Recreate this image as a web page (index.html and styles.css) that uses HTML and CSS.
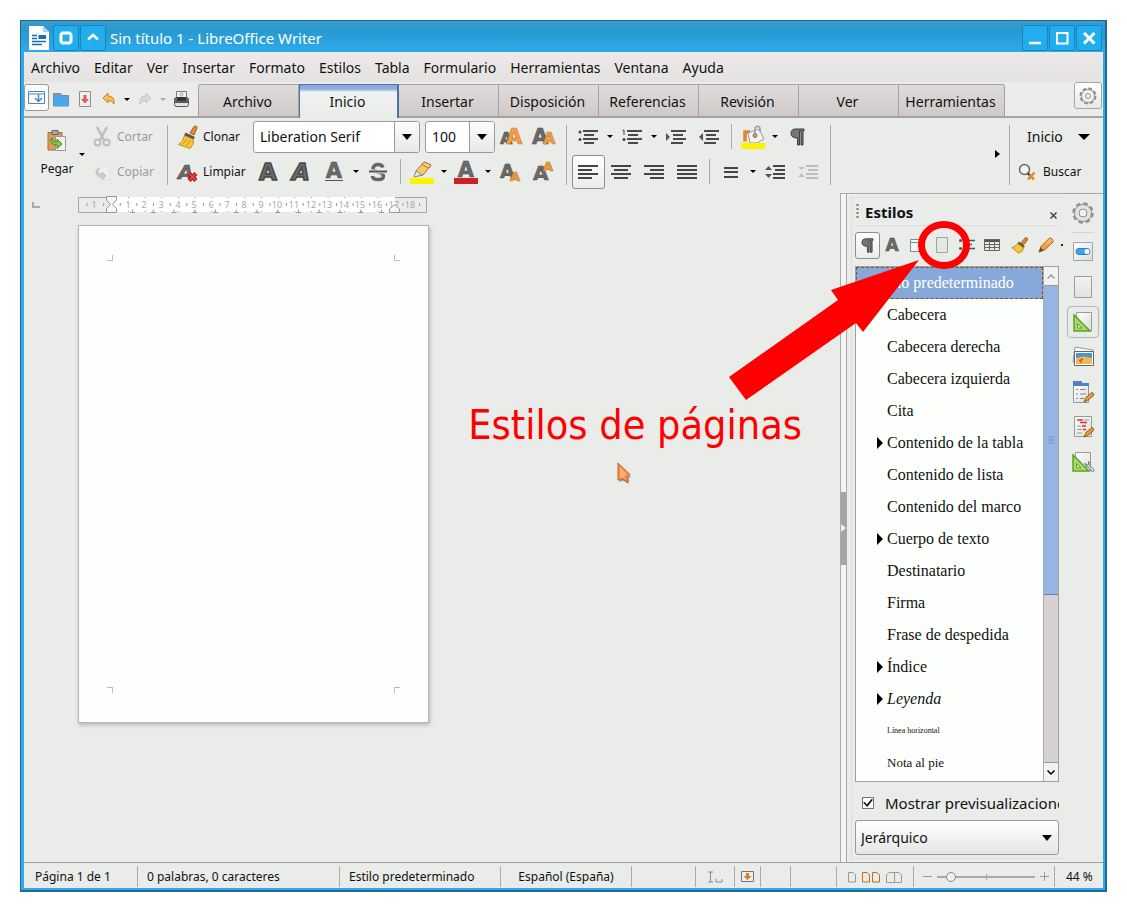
FILE: index.html
```html
<!DOCTYPE html>
<html lang="es">
<head>
<meta charset="utf-8">
<title>Sin título 1 - LibreOffice Writer</title>
<link rel="stylesheet" href="styles.css">
</head>
<body>
<svg class="defs" aria-hidden="true">
  <defs>
    <linearGradient id="g-orange" x1="0" y1="0" x2="0" y2="1"><stop offset="0" stop-color="#fbc36a"/><stop offset="1" stop-color="#ee8a24"/></linearGradient>
    <linearGradient id="g-paper" x1="0" y1="0" x2="1" y2="1"><stop offset="0" stop-color="#ffffff"/><stop offset="1" stop-color="#dcdcda"/></linearGradient>
    <linearGradient id="g-page" x1="0" y1="0" x2="0" y2="1"><stop offset="0" stop-color="#f4f4f3"/><stop offset="1" stop-color="#e0e1df"/></linearGradient>
  </defs>
  <symbol id="broom" viewBox="0 0 20 24"><path d="M12 8 16 1.500q3-1.500 3 1.500L16 10z" fill="#e08a2e" stroke="#a85d18"/><path d="M7.500 7.500 17 12 15 15 6 10.500z" fill="#555"/><path d="M6.500 10.500 15.500 14.500Q16 20 12 23.500L.5 19.500Q5.500 16.500 6.500 10.500z" fill="#f8c63a" stroke="#c58d14"/><path d="M4.500 19.500 9 14M8.500 21 12 15.500" stroke="#c58d14" fill="none"/></symbol>
  <symbol id="pencil" viewBox="0 0 16 16"><path d="M1 15 3 9.500 11.500 1q4 .5 3.500 4L6.500 13z" fill="url(#g-orange)" stroke="#a95f17"/><path d="M1 15 2.500 10.500 5.500 13.500z" fill="#5a4a3a"/></symbol>
  <symbol id="ruler3" viewBox="0 0 22 22"><path d="M4.500 1.500h15v18h-15z" fill="url(#g-paper)" stroke="#999"/><path d="M2 4v16h16z" fill="#a8d878" stroke="#5aa51c" stroke-width="1.500"/><path d="M5.500 12.500v4.500h4.500z" fill="#e5f3d8" stroke="#5aa51c"/></symbol>
  <symbol id="pilcrow" viewBox="0 0 16 20"><path d="M6.500 2H15v2h-1v14h-2V4h-1.500v14h-2v-7Q2 11 2 6.500T6.500 2z" fill="#757575" stroke="#3c3c3c"/></symbol>
</svg>

<div class="screen">
<div class="window">
  <header class="titlebar">
    <svg class="app-icon" width="20" height="24" viewBox="0 0 20 24"><path d="M0 0h14l6 6v18H0z" fill="#fff"/><path d="M14 0v6h6z" fill="#9fd4f2"/><path d="M3 9.500h5M3 12.500h5M3 15.500h14M3 18.500h10" stroke="#1a6fae" stroke-width="1.500"/><rect x="9.500" y="9" width="7.500" height="4" fill="#1a6fae"/></svg>
    <button class="wbtn" aria-label="Fijar"><svg width="16" height="16" viewBox="0 0 16 16"><path d="M4.500 3h7L13 4.500v7L11.500 13h-7L3 11.500v-7z" fill="none" stroke="#fff" stroke-width="3"/></svg></button>
    <button class="wbtn" aria-label="Enrollar"><svg width="16" height="16" viewBox="0 0 16 16"><path d="M3 9.500 8 5l5 4.500" fill="none" stroke="#fff" stroke-width="2.500"/></svg></button>
    <h1>Sin título 1 - LibreOffice Writer</h1>
    <button class="wbtn" aria-label="Minimizar"><svg width="16" height="16" viewBox="0 0 16 16"><path d="M2 13h12" stroke="#fff" stroke-width="2.500"/></svg></button>
    <button class="wbtn" aria-label="Maximizar"><svg width="16" height="16" viewBox="0 0 16 16"><path d="M3 3h10.500v10.500H3z" fill="none" stroke="#fff" stroke-width="2"/></svg></button>
    <button class="wbtn" aria-label="Cerrar"><svg width="16" height="16" viewBox="0 0 16 16"><path d="M3 3l10.500 10.500M13.500 3 3 13.500" stroke="#fff" stroke-width="3"/></svg></button>
  </header>

  <nav class="menubar">
    <button>Archivo</button><button>Editar</button><button>Ver</button><button>Insertar</button><button>Formato</button><button>Estilos</button><button>Tabla</button><button>Formulario</button><button>Herramientas</button><button>Ventana</button><button>Ayuda</button>
  </nav>

  <div class="tabrow">
    <div class="quick">
      <button class="framed" aria-label="Menú"><svg width="17" height="16" viewBox="0 0 17 16"><path d="M.5 1.500h16v12H.5zM.5 4h16" fill="none" stroke="#4d86bd"/><path d="M10.500 4v7M7 8l3.500 3.500L14 8" fill="none" stroke="#4d86bd" stroke-width="1.500"/></svg></button>
      <button aria-label="Abrir"><svg width="16" height="15" viewBox="0 0 16 15"><path d="M.5 14V1.500h7l1.500 2h6.500V14z" fill="#7d98ac" stroke="#718a9c"/><path d="M1 4.500h14V14H1z" fill="#43a9f2"/></svg></button>
      <button aria-label="Guardar"><svg width="12" height="16" viewBox="0 0 12 16"><path d="M.5.5h11v15H.5z" fill="#eee" stroke="#8e8e8e"/><path d="M4.500 4h3v4H10l-4 4.500L2 8h2.500z" fill="#e8584e"/></svg></button>
      <button aria-label="Deshacer"><svg width="14" height="14" viewBox="0 0 14 14"><path d="M6 1v3q7 0 6 8-2-3.500-6-3.500V11L1 6z" fill="#f9bd55" stroke="#d08422"/></svg></button>
      <button class="drop" aria-label="Más deshacer"><i></i></button>
      <button aria-label="Rehacer"><svg width="14" height="14" viewBox="0 0 14 14"><path d="M8 1v3Q1 4 2 12q2-3.500 6-3.500V11l5-5z" fill="#d8d9d8" stroke="#c4c5c4"/></svg></button>
      <button class="drop off" aria-label="Más rehacer"><i></i></button>
      <button aria-label="Imprimir"><svg width="17" height="16" viewBox="0 0 17 16"><path d="M3.500 7V.5h10V7" fill="#f4f4f4" stroke="#777"/><path d="M1 7.500 3 6h11l2 1.500V12H1z" fill="#666"/><path d="M4 6h9v4H4z" fill="#333"/><circle cx="8.500" cy="3.500" r="1.500" fill="none" stroke="#999"/><path d="M1.500 11.500h14v2q0 2-2 2h-10q-2 0-2-2z" fill="#e4e4e4" stroke="#555"/></svg></button>
    </div>
    <div class="tabs" role="tablist">
      <button role="tab">Archivo</button><button role="tab" class="active" aria-selected="true">Inicio</button><button role="tab">Insertar</button><button role="tab">Disposición</button><button role="tab">Referencias</button><button role="tab">Revisión</button><button role="tab">Ver</button><button role="tab">Herramientas</button>
    </div>
    <div class="tab-end">
      <button class="gear" aria-label="Configuración"><svg width="18" height="18" viewBox="0 0 18 18"><g fill="none" stroke="#8f8f8f"><circle cx="9" cy="9" r="7.500" stroke-dasharray="3.900 2" stroke-width="2"/><circle cx="9" cy="9" r="6.500" fill="#f2f2f2"/><circle cx="9" cy="9" r="2.500"/></g></svg></button>
    </div>
  </div>

  <div class="toolbar">
    <div class="paste">
      <button><svg width="20" height="24" viewBox="0 0 20 24"><path d="M1 3.500h14V21H1z" fill="#d99a5b" stroke="#a8713b"/><path d="M5 1.500h6v4H5z" fill="#aaa" stroke="#666"/><path d="M8.500 7.500h10v14h-10z" fill="#f3f3f3" stroke="#999"/><path d="M5 9q0 4 5 4v-3l5 5-5 4.500V16q-6 0-6.500-5z" fill="#86c940" stroke="#458c16"/></svg><span>Pegar</span></button>
      <button class="drop" aria-label="Pegado especial"><i></i></button>
    </div>
    <div class="rows cutcopy">
      <div class="row"><button class="labelled off"><svg width="18" height="20" viewBox="0 0 18 20"><g fill="none" stroke="#bdbebd"><path d="M4 0l7 13M14 0 7 13" stroke-width="2.500"/><ellipse cx="4.500" cy="15.500" rx="3" ry="3" stroke-width="2"/><ellipse cx="13.500" cy="15.500" rx="3" ry="3" stroke-width="2"/></g></svg><span>Cortar</span></button></div>
      <div class="row"><button class="labelled off"><svg width="18" height="18" viewBox="0 0 18 18"><path d="M5.500 3.500h11v13h-11z" fill="#efefee" stroke="#e2e3e2"/><path d="M7 5q-4 2-2 5 2 2 4 1.500V9l4 4-4 3.500V14q-6 0-6-5 0-3 4-4z" fill="#cfd0cf" stroke="#bdbebd"/></svg><span>Copiar</span></button></div>
    </div>
    <div class="vsep"></div>
    <div class="rows format">
      <div class="row"><button class="labelled"><svg width="20" height="24"><use href="#broom"/></svg><span>Clonar</span></button></div>
      <div class="row"><button class="labelled"><svg width="20" height="20" viewBox="0 0 20 20"><text x="0" y="17" class="ga gi" font-size="20">A</text><path d="M11 11.500l7 7M18 11.500l-7 7" stroke="#a31212" stroke-width="4"/><path d="M11 11.500l7 7M18 11.500l-7 7" stroke="#e8403a" stroke-width="2"/></svg><span>Limpiar</span></button></div>
    </div>
    <div class="rows">
      <div class="row">
        <div class="combo combo-font"><input type="text" value="Liberation Serif" aria-label="Nombre de letra"><button aria-label="Lista de letras"><i></i></button></div>
        <div class="combo combo-size"><input type="text" value="100" aria-label="Tamaño"><button aria-label="Lista de tamaños"><i></i></button></div>
        <button class="cell" aria-label="Aumentar tamaño"><svg width="24" height="22" viewBox="0 0 24 22"><text x="1" y="18" class="ga" font-size="16">A</text><text x="7" y="18" class="go" font-size="21">A</text></svg></button>
        <button class="cell" aria-label="Reducir tamaño"><svg width="24" height="22" viewBox="0 0 24 22"><text x="0" y="18" class="ga" font-size="21">A</text><text x="11" y="18" class="go" font-size="16">A</text></svg></button>
      </div>
      <div class="row">
        <button class="cell" aria-label="Negrita"><svg width="22" height="22" viewBox="0 0 22 22"><text x="11" y="19" class="ga gw" text-anchor="middle" font-size="23">A</text></svg></button>
        <button class="cell" aria-label="Cursiva"><svg width="22" height="22" viewBox="0 0 22 22"><text x="11" y="19" class="ga gw gi" text-anchor="middle" font-size="23">A</text></svg></button>
        <button class="cell" aria-label="Subrayado"><svg width="22" height="22" viewBox="0 0 22 22"><text x="11" y="17" class="ga" text-anchor="middle" font-size="21">A</text><path d="M2 19.500h18" stroke="#555"/></svg></button>
        <button class="drop" aria-label="Más subrayado"><i></i></button>
        <button class="cell" aria-label="Tachado"><svg width="22" height="22" viewBox="0 0 22 22"><path d="M16 6.500Q15 3.500 11 3.500T6 7q0 3 5 4t5.500 4q0 3.500-5.500 3.500T5.500 15" fill="none" stroke="#666" stroke-width="3.500"/><path d="M2 10.500h18" stroke="#eaecea" stroke-width="4"/><path d="M2 10.500h18" stroke="#555" stroke-width="2"/></svg></button>
        <div class="hsep"></div>
        <button class="cell" aria-label="Color de resaltado"><svg width="24" height="24" viewBox="0 0 24 24"><path d="M6 11 14 2l7 3-8 10-5 1z" fill="#fbc95c" stroke="#a8722a"/><path d="M14 2l7 3-2 3-7-3.500z" fill="#f3d9a0" stroke="#a8722a"/><path d="M6 11 4 17l4-1 4-1z" fill="#e9e9e9" stroke="#888"/><path d="M0 18h24v6H0z" fill="#fff200"/></svg></button>
        <button class="drop" aria-label="Más resaltado"><i></i></button>
        <button class="cell" aria-label="Color de letra"><svg width="24" height="24" viewBox="0 0 24 24"><text x="12" y="17" class="ga" text-anchor="middle" font-size="21">A</text><path d="M0 18h24v6H0z" fill="#cd1f24"/></svg></button>
        <button class="drop" aria-label="Más colores"><i></i></button>
        <button class="cell" aria-label="Subíndice"><svg width="24" height="24" viewBox="0 0 24 24"><text x="2" y="18" class="ga" font-size="19">A</text><text x="12" y="21" class="go" font-size="13">A</text></svg></button>
        <button class="cell" aria-label="Superíndice"><svg width="24" height="24" viewBox="0 0 24 24"><text x="2" y="20" class="ga" font-size="20">A</text><text x="12" y="11" class="go" font-size="13">A</text></svg></button>
      </div>
    </div>
    <div class="vsep"></div>
    <div class="rows">
      <div class="row">
        <button class="cell" aria-label="Viñetas"><svg width="20" height="16" viewBox="0 0 20 16"><path d="M5 2h15M6 6h10M5 10h15M6 14h10" stroke="#4a4a4a" stroke-width="2"/><circle cx="2" cy="3" r="1.500" fill="#444"/><circle cx="2" cy="10.500" r="1.500" fill="#444"/></svg></button>
        <button class="drop" aria-label="Más viñetas"><i></i></button>
        <button class="cell" aria-label="Numeración"><svg width="20" height="16" viewBox="0 0 20 16"><path d="M5 2h15M6 6h10M5 10h15M6 14h10" stroke="#4a4a4a" stroke-width="2"/><path d="M.5 2 2 .8V6" stroke="#444" fill="none"/><circle cx="2" cy="10.500" r="1.500" fill="#444"/></svg></button>
        <button class="drop" aria-label="Más numeración"><i></i></button>
        <button class="cell" aria-label="Aumentar sangría"><svg width="20" height="16" viewBox="0 0 20 16"><path d="M5 2h15M7 6h10M7 10h13M5 14h12" stroke="#4a4a4a" stroke-width="2"/><path d="M0 4v8l4-4z" fill="#555"/></svg></button>
        <button class="cell" aria-label="Reducir sangría"><svg width="20" height="16" viewBox="0 0 20 16"><path d="M5 2h15M7 6h10M7 10h13M5 14h12" stroke="#4a4a4a" stroke-width="2"/><path d="M4 4v8L0 8z" fill="#555"/></svg></button>
        <div class="hsep"></div>
        <button class="cell" aria-label="Color de fondo"><svg width="24" height="24" viewBox="0 0 24 24"><path d="M4 16.500V7h5" fill="none" stroke="#e0862d" stroke-width="3.500"/><path d="M7 8 18 4l5 10-7 4H9z" fill="#f3f3f3" stroke="#999"/><path d="M14 9V3q2.500-3.500 5 0v4" fill="none" stroke="#999" stroke-width="1.500"/><circle cx="14" cy="10.500" r="2" fill="#e8943c" stroke="#777"/><path d="M0 18h24v6H0z" fill="#fff200"/></svg></button>
        <button class="drop" aria-label="Más fondos"><i></i></button>
        <button class="cell" aria-label="Marcas de formato"><svg width="16" height="20"><use href="#pilcrow"/></svg></button>
      </div>
      <div class="row">
        <button class="cell pressed" aria-label="Izquierda"><svg width="20" height="16" viewBox="0 0 20 16"><path d="M0 2h20M0 6h14M0 10h20M0 14h14" stroke="#444" stroke-width="2"/></svg></button>
        <button class="cell" aria-label="Centro"><svg width="20" height="16" viewBox="0 0 20 16"><path d="M0 2h20M3 6h14M0 10h20M3 14h14" stroke="#444" stroke-width="2"/></svg></button>
        <button class="cell" aria-label="Derecha"><svg width="20" height="16" viewBox="0 0 20 16"><path d="M0 2h20M6 6h14M0 10h20M6 14h14" stroke="#444" stroke-width="2"/></svg></button>
        <button class="cell" aria-label="Justificado"><svg width="20" height="16" viewBox="0 0 20 16"><path d="M0 2h20M0 6h20M0 10h20M0 14h20" stroke="#444" stroke-width="2"/></svg></button>
        <div class="hsep"></div>
        <button class="cell" aria-label="Interlineado"><svg width="14" height="12" viewBox="0 0 14 12"><path d="M0 2h14M0 6h14M0 11h14" stroke="#444" stroke-width="2"/></svg></button>
        <button class="drop" aria-label="Más interlineado"><i></i></button>
        <button class="cell" aria-label="Aumentar espaciado"><svg width="20" height="16" viewBox="0 0 20 16"><path d="M8 2h12M10 6h10M8 10h12M8 14h12" stroke="#444" stroke-width="2"/><path d="M0 6h7L3.500 2zM0 10h7l-3.500 4z" fill="#555"/></svg></button>
        <button class="cell" aria-label="Reducir espaciado"><svg width="20" height="16" viewBox="0 0 20 16"><path d="M8 2h12M10 6h10M8 10h12M8 14h12" stroke="#bcbdbc" stroke-width="2"/><path d="M0 3h7L3.500 6zM0 13h7l-3.500-4z" fill="#c0c1c0"/></svg></button>
      </div>
    </div>
    <div class="vsep"></div>
    <button class="more" aria-label="Más herramientas"><i></i></button>
    <div class="vsep"></div>
    <div class="rows side-tools">
      <div class="row"><button class="home">Inicio<i></i></button></div>
      <div class="row"><button class="find"><svg width="18" height="18" viewBox="0 0 18 18"><circle cx="6.500" cy="6.500" r="5" fill="#f4f4f4" stroke="#666" stroke-width="1.500"/><path d="M9 9.500l7 7M16.500 9.500l-6.500 7" stroke="#e08a2e" stroke-width="2.500"/><path d="M9.500 10l2 2" stroke="#444" stroke-width="2"/></svg>Buscar</button></div>
    </div>
  </div>

  <div class="work">
    <main class="doc">
      <svg class="tabstop" width="8" height="6" viewBox="0 0 8 6"><path d="M1 0v5h7" fill="none" stroke="#aaa" stroke-width="2"/></svg>
      <div class="canvas">
        <svg class="ruler" width="350" height="18" viewBox="0 0 350 18">
          <path d="M33 1h284v15H33z" fill="#fdfffd"/>
          <path d="M33 1.500H.5v15H33M317 1.500h31.500v15H317" fill="none" stroke="#a5a5a5"/>
          <path d="M8.500 8.500H345" stroke="#999" stroke-width="3" stroke-dasharray="1 15.630"/>
          <path d="M50 1.500H316M50 15.500H316" stroke="#999" stroke-dasharray="1 15.630"/>
          <path d="M52 16.500H308" stroke="#999" stroke-dasharray="5 15.750"/><path d="M54 15H308" stroke="#999" stroke-width="3" stroke-dasharray="1 19.750"/>
          <path d="M28.500.5h10v3.500l-4 4.500 4 4v4h-10v-4l4-4-4-4.500z" fill="#f4f5f4" stroke="#999"/>
          <g class="nums">
            <text x="16" y="12">1</text><text x="50" y="12">1</text><text x="66" y="12">2</text><text x="83" y="12">3</text><text x="100" y="12">4</text><text x="116" y="12">5</text><text x="133" y="12">6</text><text x="149" y="12">7</text><text x="166" y="12">8</text><text x="183" y="12">9</text><text x="199" y="12">10</text><text x="216" y="12">11</text><text x="233" y="12">12</text><text x="249" y="12">13</text><text x="266" y="12">14</text><text x="282" y="12">15</text><text x="299" y="12">16</text><text x="316" y="12">17</text><text x="332" y="12">18</text>
          </g>
          <path d="M316.500 8.500l5 4.500v3.500h-10V13z" fill="#f4f5f4" stroke="#999"/>
        </svg>
        <div class="page"><b></b><b></b><b></b><b></b></div>
      </div>
    </main>
    <div class="splitter"><span></span></div>
    <aside class="panel">
      <div class="deck">
        <div class="deck-head"><svg width="3" height="15" viewBox="0 0 3 15"><path d="M1.500 0v15" stroke="#777" stroke-width="2" stroke-dasharray="2 2"/></svg><h2>Estilos</h2><button aria-label="Cerrar"><svg width="7" height="7" viewBox="0 0 7 7"><path d="M.5.5l6 6M6.500.5l-6 6" stroke="#444" stroke-width="1.500"/></svg></button></div>
        <div class="deck-tools">
          <button class="pressed" aria-label="Estilos de párrafo"><svg width="14" height="17"><use href="#pilcrow"/></svg></button>
          <button aria-label="Estilos de carácter"><svg width="16" height="16" viewBox="0 0 16 16"><text x="8" y="14" class="ga" text-anchor="middle" font-size="17">A</text></svg></button>
          <button aria-label="Estilos de marco"><svg width="16" height="16" viewBox="0 0 16 16"><path d="M1.500 2.500h13v12h-13zM1.500 5.500h13" fill="#f5f5f4" stroke="#888"/></svg></button>
          <button aria-label="Estilos de página"><svg width="14" height="18" viewBox="0 0 14 18"><path d="M1.500 1.500h11v15h-11z" fill="#e6e7e5" stroke="#a2a2a2"/></svg></button>
          <button aria-label="Estilos de lista"><svg width="16" height="16" viewBox="0 0 16 16"><path d="M4 3.500h12M4 7.500h9M4 11.500h12" stroke="#555" stroke-width="1.500"/><circle cx="1.500" cy="3.500" r="1.500" fill="#555"/><circle cx="1.500" cy="11.500" r="1.500" fill="#555"/></svg></button>
          <button aria-label="Estilos de tabla"><svg width="16" height="12" viewBox="0 0 16 12"><path d="M0 0h16v3H0z" fill="#555"/><path d="M.5.5h15v11H.5zM.5 5.500h15M.5 8.500h15M5.500 2v9.500M10.500 2v9.500" fill="none" stroke="#666"/></svg></button>
          <button class="wide" aria-label="Modo de relleno"><svg width="17" height="18" viewBox="0 0 17 18"><path d="M10 7 14.500 1.500q2.500 0 2 2.500L12.500 9z" fill="#e08a2e" stroke="#a85d18"/><path d="M8 5.500 14 10.500 12 12 6.500 7.500z" fill="#555"/><path d="M6.500 7.500 12.500 12Q11.500 16.500 7.500 17L.8 11.500Q4.500 11 6.500 7.500z" fill="#f8c63a" stroke="#c58d14"/></svg></button>
          <button aria-label="Nuevo estilo"><svg width="16" height="16"><use href="#pencil"/></svg></button>
          <button class="cut" aria-label="Más acciones"><i></i></button>
        </div>
        <div class="tree">
          <ul>
            <li class="sel">Estilo predeterminado</li>
            <li>Cabecera</li>
            <li>Cabecera derecha</li>
            <li>Cabecera izquierda</li>
            <li>Cita</li>
            <li class="parent">Contenido de la tabla</li>
            <li>Contenido de lista</li>
            <li>Contenido del marco</li>
            <li class="parent">Cuerpo de texto</li>
            <li>Destinatario</li>
            <li>Firma</li>
            <li>Frase de despedida</li>
            <li class="parent">Índice</li>
            <li class="parent caption">Leyenda</li>
            <li class="tiny">Línea horizontal</li>
            <li class="small">Nota al pie</li>
          </ul>
          <div class="scroll">
            <button aria-label="Subir"><svg width="8" height="5" viewBox="0 0 8 5"><path d="M.5 4.500 4 1l3.500 3.500" fill="none" stroke="#999" stroke-width="1.500"/></svg></button>
            <div class="track"><div class="thumb"><svg width="6" height="9" viewBox="0 0 6 9"><path d="M0 1h6M0 4h6M0 7h6" stroke="#6f93c4"/></svg></div></div>
            <button aria-label="Bajar"><svg width="8" height="5" viewBox="0 0 8 5"><path d="M.5.5 4 4 7.500.5" fill="none" stroke="#000" stroke-width="1.500"/></svg></button>
          </div>
        </div>
        <label class="preview"><input type="checkbox" checked><span>Mostrar previsualizaciones</span></label>
        <div class="select"><select aria-label="Filtro"><option>Jerárquico</option></select><i></i></div>
      </div>
    </aside>
    <nav class="decks">
      <button aria-label="Configuración"><svg width="24" height="24" viewBox="0 0 24 24"><circle cx="12" cy="12" r="9.500" fill="none" stroke="#8f8f8f" stroke-width="2.500" stroke-dasharray="4.460 3"/><circle cx="12" cy="12" r="8.500" fill="#e3e3e2" stroke="#8f8f8f"/><circle cx="12" cy="12" r="4" fill="#f3f3f3" stroke="#8f8f8f"/></svg></button>
      <hr>
      <button aria-label="Propiedades"><svg width="22" height="22" viewBox="0 0 22 22"><path d="M1.500 1.500h19v18h-19z" fill="url(#g-paper)" stroke="#a5a5a5"/><rect x="4" y="7.500" width="14" height="6" rx="3" fill="#3ba3ee" stroke="#2f7fc0"/><circle cx="15" cy="10.500" r="2.500" fill="#fff"/></svg></button>
      <button aria-label="Página"><svg width="20" height="24" viewBox="0 0 20 24"><path d="M1.500 1.500h17v21h-17z" fill="url(#g-page)" stroke="#9c9c9c"/></svg></button>
      <button class="on" aria-label="Estilos"><svg width="22" height="22"><use href="#ruler3"/></svg></button>
      <button aria-label="Galería"><svg width="24" height="22" viewBox="0 0 24 22"><path d="M4 1l18 3-2 14L2 16z" fill="#f7f7f7" stroke="#999"/><path d="M3.500 5.500h19v14h-19z" fill="#fff" stroke="#666"/><path d="M5 7h16v6H5z" fill="#4396d8"/><path d="M5 12q8-3 16 0v6H5z" fill="#f2b650"/><path d="M8 15l4-2M10 13v4" stroke="#cf3f1d"/></svg></button>
      <button aria-label="Navegador"><svg width="24" height="24" viewBox="0 0 24 24"><path d="M2.500 4.500h15v18h-15z" fill="url(#g-paper)" stroke="#8d97a5"/><path d="M2 1h9v2h7v3H2z" fill="#4f83bf"/><path d="M5 9.500h2M9 9.500h6M5 14h2M9 14h6M5 18.500h2M9 18.500h4" stroke="#888"/><path d="M13 22 15 17.500l6-5q2.500 1 1.500 3l-6 5z" fill="#ef9b3c" stroke="#9a5614"/></svg></button>
      <button aria-label="Inspector"><svg width="24" height="24" viewBox="0 0 24 24"><path d="M3.500 1.500h17v20h-17z" fill="url(#g-paper)" stroke="#999"/><path d="M6 5h6M9 7.500h7M11 11h4M12 14.500h3" stroke="#d33" stroke-width="1.500"/><path d="M13 5h5M6 11h4M6 14.500h5M6 18h5" stroke="#999"/><path d="M13 22 15 17.500l6-5q2.500 1 1.500 3l-6 5z" fill="#ef9b3c" stroke="#9a5614"/></svg></button>
      <button aria-label="Comprobación"><svg width="24" height="22" viewBox="0 0 24 22"><use href="#ruler3" width="22" height="22"/><path d="M14 12q0 4 3.500 4l4 5 2-2-4.500-4q1-3-1.500-4.500v3l-2 .5z" fill="#ddd" stroke="#777"/></svg></button>
    </nav>
  </div>

  <footer class="status">
    <span class="s-page">Página 1 de 1</span>
    <span class="s-words">0 palabras, 0 caracteres</span>
    <span class="s-style">Estilo predeterminado</span>
    <span class="s-lang">Español (España)</span>
    <span class="s-fill"></span>
    <span class="s-ico"><svg width="16" height="12" viewBox="0 0 16 12"><path d="M1 1h5M3.500 1v10M1 11h5M9 8v3h6V8" fill="none" stroke="#888"/></svg></span>
    <span class="s-save"><svg width="13" height="12" viewBox="0 0 13 12"><path d="M.5.5h12v10H.5z" fill="#eee" stroke="#777"/><path d="M5 2h3v3h2.500l-4 4-4-4H5z" fill="#d5821f"/></svg></span>
    <span class="s-gap1"></span><span class="s-gap2"></span>
    <span class="s-view"><svg width="56" height="12" viewBox="0 0 56 12"><g fill="none" stroke="#999"><path d="M1.500 1.500H6l2.500 2.500v7h-7z"/><path d="M15.500 1.500H20l2.500 2.500v7h-7zM25.500 1.500H30l2.500 2.500v7h-7z" stroke="#c9691a"/><path d="M47.500 11.500h-8V4L42 1.500h5.500zM47.500 1.500H52L54.500 4v7.500h-7"/></g></svg></span>
    <span class="s-zoom"><button aria-label="Reducir"><svg width="9" height="9" viewBox="0 0 9 9"><path d="M0 4.500h9" stroke="#999"/></svg></button><input type="range" min="0" max="100" value="10" aria-label="Escala"><button aria-label="Ampliar"><svg width="9" height="9" viewBox="0 0 9 9"><path d="M0 4.500h9M4.500 0v9" stroke="#999"/></svg></button></span>
    <span class="s-pct">44 %</span>
  </footer>
</div>

<svg class="arrow" width="250" height="190" viewBox="0 0 250 190"><ellipse cx="219" cy="30" rx="22.500" ry="20.500" fill="none" stroke="#f00" stroke-width="7"/><path d="M194 45 106 75l7 10L4 162l17 23L131 108l7 9z" fill="#f00"/></svg>
<p class="note">Estilos de páginas</p>
<svg class="pointer" width="16" height="24" viewBox="0 0 16 24"><path d="M2 3 14 15l-3 2 2 1-2 4-4-3-5 1z" fill="#000" opacity=".25"/><path d="M1 1 13 12.500 10.500 15v5.500L6 17.500l-5 .5z" fill="#f0924a" stroke="#b8641a"/><path d="M3 5l6.500 7L7 15l-4 1z" fill="#f7ae7e"/></svg>
</div>
</body>
</html>
```
FILE: styles.css
```css
* { box-sizing: border-box; }
body { margin: 0; background: #fff; color: #111; font: 14px/20px "Noto Sans", sans-serif; }
button { margin: 0; padding: 0; border: 0; background: none; color: inherit; font: inherit; display: flex; align-items: center; justify-content: center; flex: none; }
svg { display: block; flex: none; overflow: visible; }
.defs { position: absolute; width: 0; height: 0; }
.screen { position: relative; min-height: 100vh; padding: 20px; display: flex; flex-direction: column; }
.window { flex: 1; display: flex; flex-direction: column; border: 1px solid #1f6a92; border-width: 1px 2px 2px 1px; padding: 0 2px 2px 3px; background: linear-gradient(#eaecea, #eaecea) content-box, #2faaec; }

.ga, .go { font-family: "DejaVu Sans", sans-serif; font-weight: bold; }
.ga { fill: #6a6a6a; stroke: #484848; stroke-width: 0.5px; }
.go { fill: #f0a04c; stroke: #d07a1a; stroke-width: 0.7px; }
.gw { stroke-width: 1.5px; }
.gi { font-style: italic; }

.titlebar { height: 31px; margin: 0 -2px 0 -3px; padding: 3px 3px 0 8px; display: flex; align-items: center; background: linear-gradient(#3d9bce, #2799cf 30%, #2eaaeb); color: #fff; }
.titlebar h1 { flex: 1; margin: 0 0 0 4px; font-size: 15px; font-weight: 400; line-height: 24px; }
.app-icon { margin-right: 3px; }
.wbtn { width: 26px; height: 26px; margin-left: 1px; background: #20aeef; border: 1px solid #1c84bb; border-radius: 2px; }

.menubar { display: flex; height: 30px; padding: 2px 0 0; background: linear-gradient(#eceae9, #e4e3e2); }
.menubar button { padding: 0 7px; }

.tabrow { display: flex; height: 36px; flex: none; align-items: stretch; box-shadow: inset 0 -2px #a9a1a1; }
.quick { display: flex; width: 174px; padding-bottom: 2px; }
.quick button { width: 24px; }
.quick .framed { width: 25px; height: 27px; margin-top: 2px; border: 1px solid #999; border-radius: 3px; background: #fcfcfc; }
.drop { width: 11px; padding-right: 2px; }
.quick .drop { width: 12px; padding: 0; }
.drop i { border: 3px solid transparent; border-top-color: #000; border-bottom: 0; }
.drop.off i { border-top-color: #aaa; }
.tabs { display: flex; padding-top: 2px; }
.tabs button { min-width: 100px; padding: 2px 2px 0 0; background: linear-gradient(#dfdbda, #cfcaca); border: 1px solid #a9a1a1; border-left-width: 0; border-bottom-width: 2px; }
.tabs button:first-child { min-width: 101px; border-left-width: 1px; border-radius: 3px 0 0 0; }
.tabs button:last-child { min-width: 106px; border-radius: 0 3px 0 0; }
.tabs .active { background: linear-gradient(#8caadd 4px, #eff2f0 7px, #eaecea); border: 1px solid #4a74a8; border-width: 1px 2px 0 1px; padding-top: 0; }
.tab-end { flex: 1; display: flex; justify-content: flex-end; padding-right: 1px; }
.gear { width: 28px; height: 27px; border: 1px solid #a5a5a5; border-radius: 3px; background: linear-gradient(#fff, #e8e8e8); }

.toolbar { display: flex; height: 75px; flex: none; padding: 1px 0 4px; font-size: 12px; }
.row { display: flex; align-items: center; height: 35px; }
.cell { width: 33px; height: 34px; padding-right: 1px; }
.pressed { background: linear-gradient(#fff, #ececec); border: 1px solid #8d8d8d; border-radius: 3px; }
.vsep { flex: none; width: 11px; margin: 6px 0 4px; background: linear-gradient(#aaa, #aaa) 5px 0 / 1px 100% no-repeat; }
.hsep { flex: none; width: 11px; height: 25px; background: linear-gradient(#aaa, #aaa) 5px 0 / 1px 100% no-repeat; }
.paste { display: flex; width: 62px; padding-left: 11px; }
.paste > button:first-child { width: 44px; flex-direction: column; justify-content: flex-start; gap: 7px; padding-top: 10px; line-height: 18px; }
.paste .drop { width: 6px; padding: 0; }
.cutcopy { width: 76px; padding-left: 7px; }
.format { width: 79px; padding-left: 3px; }
.labelled { gap: 6px; }
.format .labelled { gap: 5px; padding-left: 2px; }
.labelled.off { color: #9a9a9a; }
.combo { display: flex; height: 32px; margin: 0 5px 0 0; border: 1px solid #999; border-radius: 3px; background: #fff; overflow: hidden; }
.combo-font { width: 167px; margin-left: 1px; }
.combo-size { width: 70px; margin-right: 0; }
.combo input { flex: 1; min-width: 0; border: 0; padding: 0 6px; background: none; font: inherit; font-size: 14px; color: #111; outline: 0; }
.combo button { width: 25px; border-left: 1px solid #999; background: linear-gradient(#fdfdfd, #e8e8e8); }
.combo i, .home i, .select i { border: 5px solid transparent; border-top: 6px solid #000; border-bottom: 0; }
.more { margin-left: auto; width: 13px; }
.more i { border: 4px solid transparent; border-left: 5px solid #000; border-right: 0; }
.side-tools { width: 88px; padding-left: 3px; }
.home { gap: 15px; padding-left: 9px; font-size: 14px; }
.home i { border-width: 6px 6px 0; }
.find { gap: 7px; }

.work { flex: 1; display: flex; min-height: 0; }
.doc { flex: 1; display: flex; align-items: flex-start; padding-left: 8px; }
.tabstop { margin: 9px 38px 0 0; }
.ruler { margin-top: 3px; }
.nums { font: 9px "Noto Sans", sans-serif; fill: #aaa; text-anchor: middle; }
.page { display: grid; grid-template-columns: 1fr 1fr; align-content: space-between; width: 351px; height: 498px; margin-top: 11px; padding: 29px 28px; background: #fdfffd; border: 1px solid #b5b5b5; box-shadow: 1px 2px 4px #b5b5b5; }
.page b { width: 6px; height: 6px; border: 1px solid #bbb; border-width: 0 1px 1px 0; }
.page b:nth-child(2) { justify-self: end; border-width: 0 0 1px 1px; }
.page b:nth-child(3) { border-width: 1px 1px 0 0; }
.page b:nth-child(4) { justify-self: end; border-width: 1px 0 0 1px; }
.splitter { width: 7px; display: flex; align-items: center; border: 1px solid #a9a9a9; border-bottom: 0; background: #f3f4f3; }
.splitter span { flex: 1; height: 73px; background: #a8a4a4; display: flex; align-items: center; }
.splitter span::before { content: ""; border: 4px solid transparent; border-left: 5px solid #f2f2f2; border-right: 0; }
.panel { width: 216px; display: flex; border-top: 1px solid #a9a9a9; padding: 3px 0 3px 4px; }
.deck { flex: 1; min-width: 0; display: flex; flex-direction: column; padding: 0 4px 3px 3px; border: 1px solid #dededd; border-width: 1px 0 1px 1px; }
.deck-head { display: flex; align-items: center; height: 28px; gap: 6px; padding-left: 1px; border-bottom: 1px solid #dcdddc; }
.deck-head h2 { flex: 1; margin: 0; font-size: 15px; }
.deck-head button { width: 11px; padding-top: 8px; }
.deck-tools { display: flex; align-items: center; height: 40px; margin-right: -4px; padding-bottom: 2px; overflow: hidden; }
.deck-tools button { width: 25px; height: 26px; padding-right: 1px; }
.deck-tools .wide { width: 29px; }
.deck-tools .pressed { height: 27px; }
.deck-tools .cut { width: 4px; padding: 0; justify-content: flex-end; }
.cut i { width: 2px; height: 2px; background: #222; }
.tree { flex: 1; display: flex; border: 1px solid #a0a0a0; background: #fdfffd; min-height: 0; overflow: hidden; }
.tree ul { flex: 1; margin: 0; padding: 0; list-style: none; font: 16px/32px "Liberation Serif", serif; overflow: hidden; }
.tree li { height: 32px; padding-left: 31px; white-space: nowrap; }
.tree .sel { padding-left: 15px; background: #87a9d9; color: #fff; border: 1px dashed #7a5522; line-height: 30px; }
.tree .parent::before { content: ""; display: inline-block; margin: 0 4px 0 -10px; border: 6px solid transparent; border-left-color: #000; border-right: 0; vertical-align: -1px; }
.tree .caption { font-style: italic; }
.tree .tiny { font-size: 8px; }
.tree .small { font-size: 13px; }
.scroll { width: 15px; display: flex; flex-direction: column; border-left: 1px solid #aaa; }
.scroll button { height: 18px; background: #f2f2f1; }
.track { flex: 1; background: #d6d1d0; border: 1px solid #999; border-width: 1px 0; }
.thumb { height: 65%; display: flex; align-items: center; justify-content: center; background: #95b5e2; border-bottom: 1px solid #5b80b5; }
.preview { display: flex; align-items: center; gap: 11px; height: 38px; padding: 4px 0 0 7px; overflow: hidden; white-space: nowrap; font-size: 15px; }
.preview input { appearance: none; flex: none; display: grid; place-items: center; width: 12px; height: 12px; margin: 0; border: 1px solid #777; background: #fff; }
.preview input:checked::after { content: ""; width: 10px; height: 8px; background: #111; clip-path: polygon(0 45%, 18% 38%, 38% 68%, 85% 0, 100% 8%, 42% 100%); }
.select { position: relative; height: 35px; flex: none; }
.select select { appearance: none; width: 100%; height: 100%; padding: 0 5px; border: 1px solid #999; border-radius: 3px; background: linear-gradient(#fff, #e4e5e4); font: inherit; color: #111; }
.select i { position: absolute; right: 7px; top: 15px; }
.decks { width: 40px; display: flex; flex-direction: column; align-items: center; padding-top: 5px; border-top: 1px solid #a9a9a9; }
.decks button { width: 32px; height: 32px; margin-bottom: 3px; }
.decks > button:first-child { height: 28px; margin: 0; }
.decks hr { width: 22px; margin: 5px 0 3px; border: 0; border-top: 1px solid #d5d5d5; }
.decks .on { border: 1px solid #b5b5b5; border-radius: 4px; }

.status { display: flex; height: 26px; flex: none; padding: 3px 0 1px; border-top: 1px solid #a0a0a0; font-size: 12px; line-height: 21px; white-space: nowrap; }
.status > span { display: flex; align-items: center; border-left: 1px solid #aaa; height: 21px; }
.status .s-page { width: 113px; padding-left: 11px; border: 0; }
.s-words { width: 202px; padding-left: 9px; }
.s-style { width: 161px; padding-left: 9px; }
.s-lang { width: 131px; justify-content: center; }
.status .s-fill { flex: 1; }
.s-ico { width: 39px; justify-content: center; }
.s-save { width: 26px; justify-content: center; }
.s-gap1 { width: 30px; }
.s-gap2 { width: 46px; }
.s-view { width: 77px; justify-content: center; }
.s-zoom { width: 141px; padding: 0 0 0 4px; }
.s-zoom button { width: 19px; }
.s-zoom input { appearance: none; flex: 1; min-width: 0; height: 12px; margin: 0; background: linear-gradient(#aaa, #aaa) center / 1px 6px no-repeat, linear-gradient(#aaa, #aaa) center / 100% 2px no-repeat; }
.s-zoom input::-webkit-slider-thumb { appearance: none; width: 10px; height: 10px; border: 1px solid #888; border-radius: 50%; background: #f0f1f0; }
.s-pct { width: 49px; padding-left: 11px; }

.arrow { position: absolute; right: 152px; top: 215px; }
.note { position: absolute; right: 325px; top: 400px; margin: 0; color: #f00; font: 41px/50px "DejaVu Sans Condensed", "DejaVu Sans", sans-serif; white-space: nowrap; }
.pointer { position: absolute; right: 494px; top: 462px; }
```
